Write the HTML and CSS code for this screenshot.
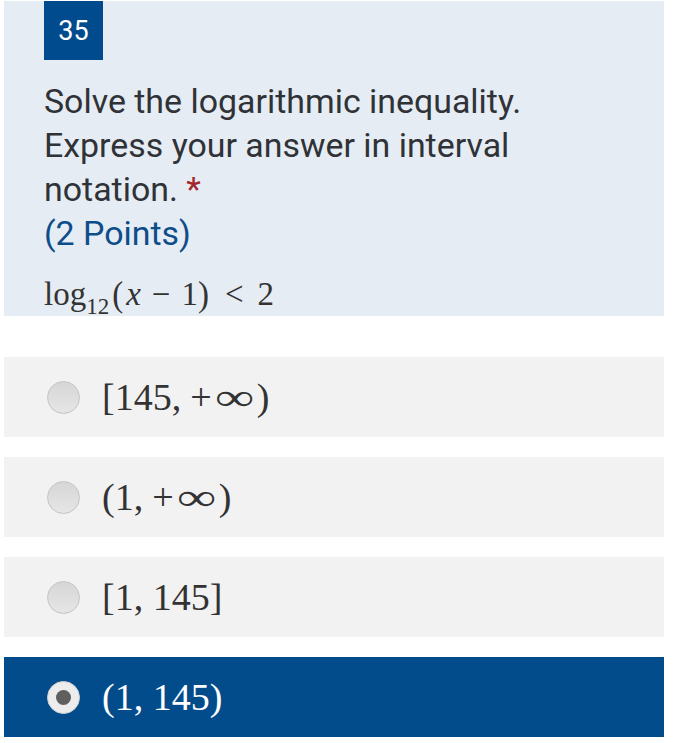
FILE: index.html
```html
<!DOCTYPE html>
<html>
<head>
<meta charset="utf-8">
<link rel="stylesheet" href="styles.css">
</head>
<body>
<div class="page">
  <div class="question">
    <div class="badge">35</div>
    <div class="title">Solve the logarithmic inequality. Express your answer in interval notation. <span class="req">*</span></div>
    <div class="points">(2 Points)</div>
    <div class="math">log<sub>12</sub><span class="paren">(</span><i>x</i><span class="bin">&minus;</span>1<span class="paren">)</span><span class="rel">&lt;</span>2</div>
  </div>
  <div class="options">
    <div class="option"><span class="radio"></span><span class="label">[145,<span class="plus">+</span><span class="inf">∞</span><span class="close">)</span></span></div>
    <div class="option"><span class="radio"></span><span class="label">(1,<span class="plus">+</span><span class="inf">∞</span><span class="close">)</span></span></div>
    <div class="option"><span class="radio"></span><span class="label">[1, 145]</span></div>
    <div class="option selected"><span class="radio"></span><span class="label">(1, 145)</span></div>
  </div>
</div>
</body>
</html>
```
FILE: styles.css
```css
html, body {
  margin: 0;
  padding: 0;
  background: #ffffff;
}
.page {
  width: 660px;
  padding: 1px 0 0 4px;
}
.question {
  background: #e6ecf3;
  padding: 0 40px 0 40px;
  height: 315px;
  box-sizing: border-box;
  font-family: Roboto, "Liberation Sans", sans-serif;
}
.badge {
  width: 59px;
  height: 59px;
  background: #004b8d;
  color: #ffffff;
  font-size: 27px;
  display: flex;
  align-items: center;
  justify-content: center;
}
.title {
  margin-top: 20px;
  font-size: 33.9px;
  line-height: 44px;
  color: #2f3237;
  width: 570px;
}
.req {
  color: #a4262c;
}
.points {
  font-size: 33.9px;
  line-height: 44px;
  color: #0d4d8a;
}
.math {
  margin-top: 20px;
  font-family: "Liberation Serif", "Times New Roman", serif;
  font-size: 33px;
  line-height: 36px;
  color: #333333;
}
.math sub {
  font-size: 23px;
  vertical-align: -9px;
  line-height: 0;
  margin-right: 3px;
}
.math i {
  font-style: italic;
  margin-left: 3px;
}
.math .paren {
  display: inline-block;
  transform: scaleY(1.1);
}
.math .bin {
  margin: 0 11px;
}
.math .rel {
  margin: 0 14px 0 16px;
}
.options {
  display: flex;
  flex-direction: column;
  gap: 20px;
  margin-top: 41px;
}
.option {
  height: 80px;
  background: #f2f2f2;
  display: flex;
  align-items: center;
  padding-left: 43px;
  gap: 22px;
  color: #333333;
}
.option.selected {
  background: #034c8c;
  color: #ffffff;
}
.radio {
  width: 33px;
  height: 33px;
  border-radius: 50%;
  box-sizing: border-box;
  border: 1px solid #c4c4c4;
  background: linear-gradient(#d6d6d6, #e6e6e6);
  flex: none;
  position: relative;
}
.selected .radio {
  background: #ececec;
  border-color: #d0d0d0;
}
.selected .radio::after {
  content: "";
  position: absolute;
  left: 8px;
  top: 8px;
  width: 15px;
  height: 15px;
  border-radius: 50%;
  background: #5f5f5f;
}
.label {
  font-family: "Liberation Serif", "Times New Roman", serif;
  font-size: 38px;
  line-height: 40px;
}
.label .plus {
  margin-left: 9px;
}
.label .inf {
  display: inline-block;
  transform: scaleX(1.45);
  margin: 0 9px 0 9px;
}
.label .close {
  margin-left: 0;
}
```
